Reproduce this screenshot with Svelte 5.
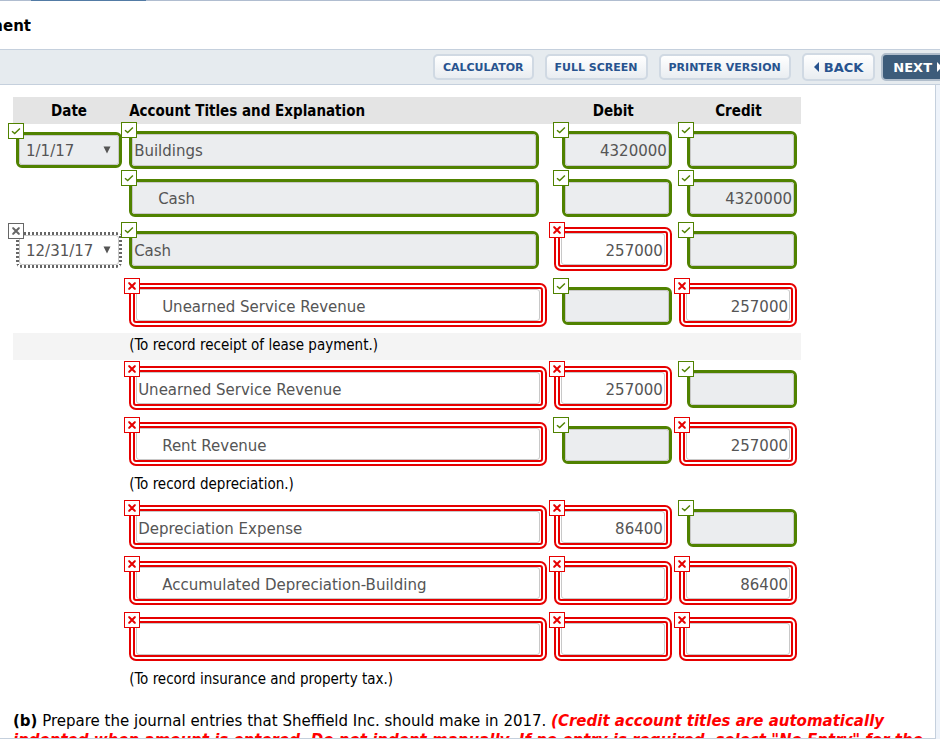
<script lang="ts">
	type Mark = 'correct' | 'wrong';

	type Field = {
		value: string;
		mark: Mark;
	};

	type EntryRow = {
		kind: 'entry';
		date?: { value: string; mark: 'correct' | 'ungraded' };
		account: Field & { indent?: boolean };
		debit: Field;
		credit: Field;
	};

	type NoteRow = {
		kind: 'note';
		text: string;
		shaded?: boolean;
	};

	const ok = (value = ''): Field => ({ value, mark: 'correct' });
	const bad = (value = ''): Field => ({ value, mark: 'wrong' });

	const rows: (EntryRow | NoteRow)[] = [
		{
			kind: 'entry',
			date: { value: '1/1/17', mark: 'correct' },
			account: ok('Buildings'),
			debit: ok('4320000'),
			credit: ok()
		},
		{
			kind: 'entry',
			account: { ...ok('Cash'), indent: true },
			debit: ok(),
			credit: ok('4320000')
		},
		{
			kind: 'entry',
			date: { value: '12/31/17', mark: 'ungraded' },
			account: ok('Cash'),
			debit: bad('257000'),
			credit: ok()
		},
		{
			kind: 'entry',
			account: { ...bad('Unearned Service Revenue'), indent: true },
			debit: ok(),
			credit: bad('257000')
		},
		{ kind: 'note', text: '(To record receipt of lease payment.)', shaded: true },
		{
			kind: 'entry',
			account: bad('Unearned Service Revenue'),
			debit: bad('257000'),
			credit: ok()
		},
		{
			kind: 'entry',
			account: { ...bad('Rent Revenue'), indent: true },
			debit: ok(),
			credit: bad('257000')
		},
		{ kind: 'note', text: '(To record depreciation.)' },
		{
			kind: 'entry',
			account: bad('Depreciation Expense'),
			debit: bad('86400'),
			credit: ok()
		},
		{
			kind: 'entry',
			account: { ...bad('Accumulated Depreciation-Building'), indent: true },
			debit: bad(),
			credit: bad('86400')
		},
		{ kind: 'entry', account: bad(), debit: bad(), credit: bad() },
		{ kind: 'note', text: '(To record insurance and property tax.)' }
	];

	const tools = ['CALCULATOR', 'FULL SCREEN', 'PRINTER VERSION'];
</script>

{#snippet badge(mark: string)}
	<span class="badge">
		<svg viewBox="0 0 10 10" width="10" height="10" aria-hidden="true">
			{#if mark === 'correct'}
				<path d="M1 5.2 L3.7 7.6 L8.9 2.4" stroke-width="1.4" />
			{:else}
				<path d="M2 2 L8 8 M8 2 L2 8" stroke-width="2" />
				<path d="M1 2 H3 M7 2 H9 M1 8 H3 M7 8 H9" stroke-width="1" />
			{/if}
		</svg>
	</span>
{/snippet}

{#snippet textField(field: Field, label: string, amount: boolean, indent: boolean)}
	<span class={`field is-${field.mark}`}>
		{@render badge(field.mark)}
		<input
			type="text"
			class:amount
			class:indent
			value={field.value}
			aria-label={label}
			readonly={field.mark === 'correct'}
		/>
	</span>
{/snippet}

<div class="page">
	<div class="tabs"><span class="tabs__active"></span></div>
	<header class="title">
		<h1>ment</h1>
	</header>

	<nav class="toolbar">
		{#each tools as tool (tool)}
			<button type="button" class="tool">{tool}</button>
		{/each}
		<div class="pager">
			<button type="button" class="tool tool--back">
				<svg viewBox="0 0 5 10" width="5" height="10" aria-hidden="true"><path d="M5 0 L0 5 L5 10 Z" /></svg>
				BACK
			</button>
			<button type="button" class="tool tool--next">
				NEXT
				<svg viewBox="0 0 5 10" width="5" height="10" aria-hidden="true"><path d="M0 0 L5 5 L0 10 Z" /></svg>
			</button>
		</div>
	</nav>

	<main class="content">
		<table>
			<thead>
				<tr>
					<th class="col-date">Date</th>
					<th class="col-account">Account Titles and Explanation</th>
					<th class="col-amount">Debit</th>
					<th class="col-amount">Credit</th>
				</tr>
			</thead>
			<tbody>
				{#each rows as row, index (index)}
					{#if row.kind === 'note'}
						<tr class="note" class:is-shaded={row.shaded}>
							<td></td>
							<td colspan="3">{row.text}</td>
						</tr>
					{:else}
						<tr>
							<td class="col-date">
								{#if row.date}
									<span class={`field is-${row.date.mark}`}>
										{@render badge(row.date.mark)}
										<select aria-label={`Date, line ${index + 1}`}>
											<option>{row.date.value}</option>
										</select>
										<svg class="arrow" viewBox="0 0 8 8" width="8" height="8" aria-hidden="true">
											<path d="M0.5 0.5 H7.5 L4 7.5 Z" />
										</svg>
									</span>
								{/if}
							</td>
							<td class={`col-account has-${row.account.mark}`}>
								{@render textField(row.account, `Account, line ${index + 1}`, false, !!row.account.indent)}
							</td>
							<td class={`col-amount has-${row.debit.mark}`}>
								{@render textField(row.debit, `Debit, line ${index + 1}`, true, false)}
							</td>
							<td class={`col-amount has-${row.credit.mark}`}>
								{@render textField(row.credit, `Credit, line ${index + 1}`, true, false)}
							</td>
						</tr>
					{/if}
				{/each}
			</tbody>
		</table>

		<p class="question">
			<b>(b)</b> Prepare the journal entries that Sheffield Inc. should make in 2017.
			<em>
				(Credit account titles are automatically indented when amount is entered. Do not indent
				manually. If no entry is required, select "No Entry" for the
			</em>
		</p>
	</main>
</div>

<style>
	:global(body) {
		background: #fff;
	}

	.page {
		display: flex;
		flex-direction: column;
		box-sizing: border-box;
		height: 100vh;
		padding-bottom: 10px;
		overflow: hidden;
		color: #000;
		font-family: Verdana, 'DejaVu Sans', sans-serif;
		font-size: 15px;
	}

	.tabs {
		flex: none;
		display: flex;
		height: 1px;
		padding-left: 31px;
		background: #b0bdd0;
	}

	.tabs__active {
		width: 115px;
		background: #527ba5;
	}

	.title {
		flex: none;
		height: 48px;
	}

	.title h1 {
		display: flex;
		justify-content: flex-end;
		width: 31px;
		margin: 0;
		overflow: hidden;
		font-size: 15px;
		line-height: 50px;
	}

	.toolbar {
		flex: none;
		display: flex;
		align-items: center;
		justify-content: flex-end;
		gap: 11px;
		box-sizing: border-box;
		height: 36px;
		border: solid #c5d0dd;
		border-width: 1px 0;
		background: #e6ebef;
		overflow: hidden;
	}

	.pager {
		display: flex;
		gap: 6px;
		margin-right: -14px;
	}

	.tool {
		display: flex;
		align-items: center;
		justify-content: center;
		gap: 5px;
		box-sizing: border-box;
		height: 26px;
		padding: 0 8px;
		border: 2px solid #d0d9e3;
		border-radius: 5px;
		background: linear-gradient(#fff, #e9edf1) padding-box;
		color: #27538f;
		font-family: inherit;
		font-size: 11px;
		font-weight: bold;
		white-space: nowrap;
	}

	.tool svg {
		fill: currentColor;
	}

	.tool--back,
	.tool--next {
		height: 28px;
		padding: 0 10px;
		font-size: 13px;
	}

	.tool--next {
		border-color: #b0bdcb;
		background: #3d5c7a;
		color: #fff;
	}

	.content {
		flex: 1;
		min-height: 0;
		box-sizing: border-box;
		margin-right: 4px;
		padding: 12px 6px 0 13px;
		border: solid #c5d0dd;
		border-width: 0 1px 1px 0;
		box-shadow: 4px 0 #eef3fa;
		overflow: hidden;
	}

	table {
		border-collapse: separate;
		border-spacing: 0;
		table-layout: fixed;
		width: 788px;
	}

	th {
		height: 27px;
		padding: 0;
		border-bottom: 1px solid #fff;
		background: #e4e4e4;
		background-clip: padding-box;
		text-align: center;
	}

	th,
	.note td {
		font-family: Tahoma, 'DejaVu Sans Condensed', 'DejaVu Sans', sans-serif;
		font-size: 15px;
		line-height: 18px;
	}

	td {
		padding: 0 4px 0 0;
		vertical-align: middle;
	}

	.col-date {
		width: 112px;
	}

	.col-account {
		width: 421px;
		padding-left: 4px;
		padding-right: 0;
		text-align: left;
	}

	.col-amount {
		width: 125px;
	}

	td.col-date {
		padding: 6px 0 4px 3px;
		box-sizing: border-box;
	}

	td.col-amount {
		box-sizing: border-box;
		text-align: right;
	}

	td.has-correct {
		padding-top: 6px;
		padding-bottom: 4px;
	}

	td.has-wrong {
		padding-top: 6px;
		padding-bottom: 6px;
	}

	.note td {
		height: 24px;
		padding: 0 4px 3px;
	}

	.is-shaded td {
		background: #f4f4f4;
	}

	.field {
		position: relative;
		display: inline-block;
		vertical-align: top;
		border: 3px solid currentColor;
		border-radius: 6px;
	}

	.is-correct {
		color: #508200;
	}

	.is-wrong {
		padding: 0 1px;
		border: 6px double #e60000;
		border-radius: 7px;
		color: #e60000;
	}

	.is-ungraded {
		border-style: dashed;
		border-color: transparent;
		background:
			repeating-linear-gradient(90deg, #666 0 2px, #fff 2px 4px) top / 100% 3px no-repeat border-box,
			repeating-linear-gradient(90deg, #666 0 2px, #fff 2px 4px) bottom / 100% 3px no-repeat border-box,
			repeating-linear-gradient(#666 0 2px, #fff 2px 4px) left / 3px 100% no-repeat border-box,
			repeating-linear-gradient(#666 0 2px, #fff 2px 4px) right / 3px 100% no-repeat border-box;
		background-origin: border-box;
		color: #666;
	}

	input,
	select {
		display: block;
		box-sizing: border-box;
		margin: 0;
		border: 1px solid #c8c8c8;
		border-radius: 3px;
		background: #fff;
		color: #555;
		font-family: inherit;
		font-size: 15px;
	}

	input {
		width: 404px;
		height: 32px;
		padding: 2px 1px 0;
	}

	input.indent {
		padding-left: 25px;
	}

	input.amount {
		width: 104px;
		text-align: right;
	}

	select {
		width: 100px;
		height: 30px;
		padding: 2px 6px 0;
		appearance: none;
	}

	.arrow {
		position: absolute;
		top: 11px;
		right: 8px;
		fill: #555;
		pointer-events: none;
	}

	.is-correct input,
	.is-correct select {
		background: #ebedef;
	}

	.is-wrong input {
		padding-top: 3px;
	}

	.badge {
		position: absolute;
		top: -12px;
		left: -11px;
		z-index: 1;
		display: flex;
		align-items: center;
		justify-content: center;
		box-sizing: border-box;
		width: 16px;
		height: 16px;
		border: 1px solid currentColor;
		background: #fff;
	}

	.col-amount .badge {
		left: -12px;
	}

	.is-wrong .badge {
		top: -11px;
		left: -11px;
	}

	.badge svg {
		fill: none;
		stroke: currentColor;
	}

	.question {
		margin: 18px 0 0;
		line-height: 19px;
	}

	.question em {
		color: #f00;
		font-weight: bold;
	}
</style>
